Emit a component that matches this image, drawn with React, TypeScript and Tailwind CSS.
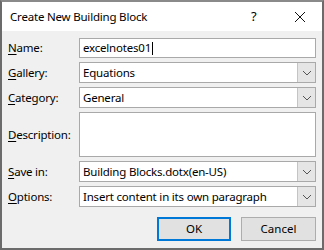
import React from "react";

const font = { fontFamily: '"Segoe UI", "Noto Sans", sans-serif' };

function Label({ k, rest }: { k: string; rest: string }) {
  return (
    <span className="text-[11.5px] tracking-[-0.2px] text-black">
      <span className="underline underline-offset-2">{k}</span>
      {rest}
    </span>
  );
}

function Chevron() {
  return (
    <svg width="10" height="6" viewBox="0 0 10 6" fill="none">
      <path d="M1 1l4 4 4-4" stroke="#555" strokeWidth="1" />
    </svg>
  );
}

function Select({ value }: { value: string }) {
  return (
    <div className="h-[21px] flex border border-[#a9a9a9] bg-white">
      <div className="flex-1 flex items-center pl-[3px] text-[11.5px] tracking-[-0.2px] text-black whitespace-nowrap overflow-hidden">
        {value}
      </div>
      <div className="w-[18px] bg-[#e5e5e5] border-l border-[#c4c4c4] flex items-center justify-center">
        <Chevron />
      </div>
    </div>
  );
}

export default function App() {
  return (
    <div
      className="w-[324px] h-[250px] bg-[#f0f0f0] border-2 border-[#6b6b6b] border-t-[#8a8a8a] flex flex-col overflow-hidden"
      style={font}
    >
      <div className="h-[29px] bg-white flex items-center pl-[8px] shrink-0">
        <span className="text-[11.5px] tracking-[-0.2px] text-black flex-1">Create New Building Block</span>
        <span className="text-[13px] text-black w-[12px] mr-[31px]">?</span>
        <svg width="12" height="12" viewBox="0 0 12 12" className="mr-[16px]">
          <path d="M1 1L11 11M11 1L1 11" stroke="#111" strokeWidth="1" />
        </svg>
      </div>
      <div className="flex-1 pt-[7px] pl-[6px] pr-[4px] flex flex-col">
        <div className="grid grid-cols-[71px_237px] gap-y-[4px] items-center">
          <Label k="N" rest="ame:" />
          <div className="h-[20px] border border-[#a9a9a9] bg-white flex items-center pl-[3px] text-[11.5px] tracking-[-0.2px] text-black">
            excelnotes01
            <span className="inline-block w-px h-[13px] bg-black ml-px" />
          </div>
          <Label k="G" rest="allery:" />
          <Select value="Equations" />
          <Label k="C" rest="ategory:" />
          <Select value="General" />
          <Label k="D" rest="escription:" />
          <div className="h-[45px] border border-[#a9a9a9] bg-white" />
          <Label k="S" rest="ave in:" />
          <Select value="Building Blocks.dotx(en-US)" />
          <Label k="O" rest="ptions:" />
          <Select value="Insert content in its own paragraph" />
        </div>
        <div className="flex justify-end gap-[10px] mt-[10px] pr-[2px]">
          <button className="w-[74px] h-[24px] bg-[#e1e1e1] border-2 border-[#0078d7] text-[11.5px] text-black">
            OK
          </button>
          <button className="w-[75px] h-[24px] bg-[#e1e1e1] border border-[#adadad] text-[11.5px] text-black">
            Cancel
          </button>
        </div>
      </div>
    </div>
  );
}
